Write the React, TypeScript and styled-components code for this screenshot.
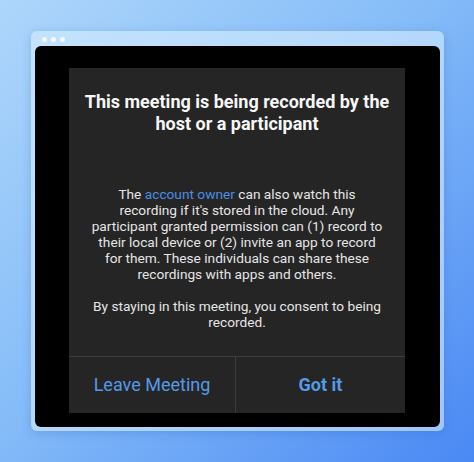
import React from "react";
import styled, { createGlobalStyle } from "styled-components";

const GlobalStyle = createGlobalStyle`
  html, body {
    margin: 0;
    padding: 0;
  }
  body {
    font-family: Roboto, "Liberation Sans", Arial, sans-serif;
  }
`;

const Backdrop = styled.div`
  width: 474px;
  height: 462px;
  box-sizing: border-box;
  padding: 31px 30px 31px 31px;
  background: linear-gradient(135deg, #aed6fb 0%, #86bdf8 45%, #4a88f4 100%);
`;

const BrowserFrame = styled.div`
  height: 100%;
  box-sizing: border-box;
  display: flex;
  flex-direction: column;
  padding: 0 4px 4px 4px;
  border-radius: 6px;
  background: rgba(214, 236, 255, 0.6);
  box-shadow: 0 2px 10px rgba(40, 90, 180, 0.25);
`;

const TitleBar = styled.div`
  height: 14px;
  display: flex;
  align-items: center;
  gap: 4px;
  padding: 1px 0 0 7px;
`;

const Dot = styled.span`
  width: 5px;
  height: 5px;
  border-radius: 50%;
  background: #f4f9ff;
`;

const Screen = styled.div`
  flex: 1;
  background: #000;
  border-radius: 6px;
  padding: 22px 35px 14px 34px;
  display: flex;
`;

const Dialog = styled.div`
  flex: 1;
  background: #252525;
  display: flex;
  flex-direction: column;
`;

const Content = styled.div`
  flex: 1;
  padding: 23px 10px 0;
  text-align: center;
`;

const Heading = styled.h2`
  margin: 0;
  font-size: 18px;
  line-height: 22px;
  font-weight: 700;
  color: #f7f7f7;
`;

const Body = styled.p`
  margin: 51px 0 0;
  font-size: 13.7px;
  line-height: 16px;
  color: #e6e6e6;
`;

const Link = styled.span`
  color: #4b8ee3;
`;

const Actions = styled.div`
  height: 56px;
  display: grid;
  grid-template-columns: 167px 1fr;
  border-top: 1px solid #3d3d3d;
`;

const ActionButton = styled.button<{ $strong?: boolean; $divided?: boolean }>`
  background: transparent;
  border: none;
  border-right: ${(p) => (p.$divided ? "1px solid #3d3d3d" : "none")};
  color: #559ae8;
  font-family: Roboto, "Liberation Sans", Arial, sans-serif;
  font-size: 18px;
  font-weight: ${(p) => (p.$strong ? 700 : 400)};
  padding: 0 0 2px;
  cursor: pointer;
`;

export default function App() {
  return (
    <>
      <GlobalStyle />
      <Backdrop>
        <BrowserFrame>
          <TitleBar>
            <Dot />
            <Dot />
            <Dot />
          </TitleBar>
          <Screen>
            <Dialog>
              <Content>
                <Heading>
                  This meeting is being recorded by the
                  <br />
                  host or a participant
                </Heading>
                <Body>
                  The <Link>account owner</Link> can also watch this
                  <br />
                  recording if it's stored in the cloud. Any
                  <br />
                  participant granted permission can (1) record to
                  <br />
                  their local device or (2) invite an app to record
                  <br />
                  for them. These individuals can share these
                  <br />
                  recordings with apps and others.
                  <br />
                  <br />
                  By staying in this meeting, you consent to being
                  <br />
                  recorded.
                </Body>
              </Content>
              <Actions>
                <ActionButton $divided>Leave Meeting</ActionButton>
                <ActionButton $strong>Got it</ActionButton>
              </Actions>
            </Dialog>
          </Screen>
        </BrowserFrame>
      </Backdrop>
    </>
  );
}
